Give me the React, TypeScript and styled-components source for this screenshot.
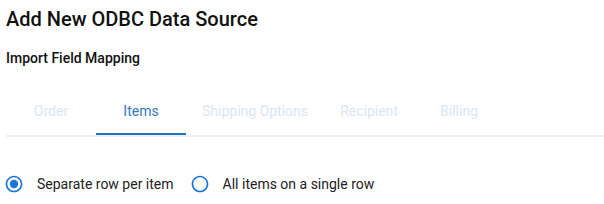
import React from "react";
import styled, { createGlobalStyle } from "styled-components";

const GlobalStyle = createGlobalStyle`
  body {
    margin: 0;
    background: #fff;
    font-family: Roboto, "Liberation Sans", sans-serif;
  }
`;

const Page = styled.div`
  padding: 3px 0 0 6px;
`;

const Title = styled.h1`
  margin: 0;
  font-size: 20px;
  line-height: 32px;
  font-weight: 500;
  color: #111;
`;

const Subtitle = styled.h2`
  margin: 13px 0 0;
  font-size: 14px;
  line-height: 20px;
  font-weight: 500;
  color: #111;
`;

const TabBar = styled.div`
  display: flex;
  margin-top: 19px;
  border-bottom: 2px solid #eeeeee;
`;

const Tab = styled.div<{ $active?: boolean }>`
  position: relative;
  min-width: 90px;
  height: 48px;
  padding: 0 16px;
  box-sizing: border-box;
  display: flex;
  align-items: center;
  justify-content: center;
  font-size: 14px;
  color: ${(p) => (p.$active ? "#3478c6" : "#d9e6f5")};

  &::after {
    content: "";
    display: ${(p) => (p.$active ? "block" : "none")};
    position: absolute;
    left: 0;
    right: 0;
    bottom: 0;
    height: 2px;
    background: #1a73c4;
  }
`;

const RadioGroup = styled.div`
  display: flex;
  align-items: center;
  margin-top: 28px;
  margin-left: -2px;
`;

const Option = styled.label`
  display: flex;
  align-items: center;
  height: 38px;
  margin-right: 16px;
  font-size: 14px;
  color: #222;
  cursor: pointer;
`;

const RadioIcon = styled.svg`
  width: 20px;
  height: 20px;
  margin-right: 13px;
  fill: #1976d2;
`;

const Radio = ({ checked }: { checked?: boolean }) => (
  <RadioIcon viewBox="0 0 24 24">
    <path d="M12 2C6.48 2 2 6.48 2 12s4.48 10 10 10 10-4.48 10-10S17.52 2 12 2zm0 18c-4.42 0-8-3.58-8-8s3.58-8 8-8 8 3.58 8 8-3.58 8-8 8z" />
    {checked && <circle cx="12" cy="12" r="5" />}
  </RadioIcon>
);

const tabs = ["Order", "Items", "Shipping Options", "Recipient", "Billing"];

export default function App() {
  return (
    <Page>
      <GlobalStyle />
      <Title>Add New ODBC Data Source</Title>
      <Subtitle>Import Field Mapping</Subtitle>
      <TabBar>
        {tabs.map((t) => (
          <Tab key={t} $active={t === "Items"}>
            {t}
          </Tab>
        ))}
      </TabBar>
      <RadioGroup>
        <Option>
          <Radio checked />
          Separate row per item
        </Option>
        <Option>
          <Radio />
          All items on a single row
        </Option>
      </RadioGroup>
    </Page>
  );
}
